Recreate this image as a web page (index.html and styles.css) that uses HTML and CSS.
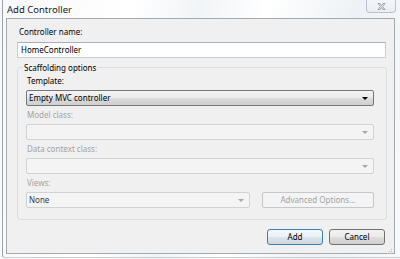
FILE: index.html
```html
<!DOCTYPE html>
<html>
<head>
  <link rel="stylesheet" href="styles.css">
</head>
<body>
  <div class="frame">
    <div class="titlebar">
      <span class="title">Add Controller</span>
      <span class="close">
        <svg width="9" height="7" viewBox="0 0 9 7"><path d="M1 0.5h2l1.5 2l1.5-2h2l-2.5 3l2.5 3h-2l-1.5-2l-1.5 2h-2l2.5-3z" fill="none" stroke="#8a9098" stroke-width="0.8"/></svg>
      </span>
    </div>
    <div class="client">
      <div class="field_label">Controller name:</div>
      <div class="textbox">HomeController</div>

      <fieldset class="group">
        <legend>Scaffolding options</legend>
        <div class="row_label">Template:</div>
        <div class="combo active">
          <span>Empty MVC controller</span>
          <span class="arrow dark"></span>
        </div>

        <div class="row_label disabled">Model class:</div>
        <div class="combo off">
          <span></span>
          <span class="arrow"></span>
        </div>

        <div class="row_label disabled">Data context class:</div>
        <div class="combo off">
          <span></span>
          <span class="arrow"></span>
        </div>

        <div class="row_label disabled">Views:</div>
        <div class="views_row">
          <div class="combo off views">
            <span class="none_text">None</span>
            <span class="arrow"></span>
          </div>
          <div class="btn_off">Advanced Options...</div>
        </div>
      </fieldset>

      <div class="buttons">
        <div class="btn default">Add</div>
        <div class="btn">Cancel</div>
      </div>
      <div class="grip">
        <svg width="6" height="6" viewBox="0 0 6 6"><rect x="4" y="0" width="1" height="1" fill="#b8bcc0"/><rect x="2" y="2" width="1" height="1" fill="#b8bcc0"/><rect x="4" y="2" width="1" height="1" fill="#b8bcc0"/><rect x="0" y="4" width="1" height="1" fill="#b8bcc0"/><rect x="2" y="4" width="1" height="1" fill="#b8bcc0"/><rect x="4" y="4" width="1" height="1" fill="#b8bcc0"/></svg>
      </div>
    </div>
  </div>
</body>
</html>
```

FILE: styles.css
```css
body {
  margin: 0;
  width: 400px;
  height: 259px;
  overflow: hidden;
  background: linear-gradient(100deg, #f7f8fa 0%, #ffffff 30%, #f1f4f7 45%, #ffffff 60%, #eef2f6 80%, #f8f9fb 100%);
  font-family: "Noto Sans", sans-serif;
  font-size: 8px;
  color: #000;
}

.frame {
  margin-left: 2px;
  height: 257px;
  border-left: 1px solid #9aa1a8;
  border-bottom: 1px solid #c8cdd2;
  border-bottom-left-radius: 3px;
  padding-left: 3px;
}

.titlebar {
  height: 18px;
  display: flex;
  justify-content: space-between;
  align-items: flex-start;
}

.title {
  font-size: 9.5px;
  margin-top: 3px;
  margin-left: 1px;
  color: #1a1a1a;
}

.close {
  width: 28px;
  height: 12px;
  margin-right: 4px;
  border: 1px solid #b9c2cb;
  border-top: none;
  border-radius: 0 0 4px 4px;
  background: linear-gradient(#f4f7fa, #e9eef3);
  display: flex;
  justify-content: center;
  align-items: center;
}

.client {
  width: 387px;
  height: 234px;
  border: 1px solid #a5aab0;
  background: #f0f0f0;
  position: relative;
}

.field_label {
  margin: 7px 0 0 12px;
  height: 11px;
  line-height: 11px;
}

.textbox {
  margin: 5px 0 0 10px;
  width: 364px;
  height: 14px;
  line-height: 14px;
  padding-left: 3px;
  background: #fff;
  border: 1px solid #c5cdd6;
  border-top-color: #a9b1ba;
}

.group {
  margin: 4px 0 0 10px;
  width: 370px;
  height: 158px;
  box-sizing: border-box;
  border: 1px solid #d8dde2;
  border-radius: 3px;
  padding: 0 0 0 8px;
}

.group legend {
  padding: 0 1px;
  margin-left: -3px;
  line-height: 11px;
}

.row_label {
  margin: 3px 0 0 1px;
  height: 10px;
  line-height: 10px;
}

.row_label.disabled {
  color: #a3a3a3;
  margin-top: 4px;
}

.combo {
  margin-top: 4px;
  width: 344px;
  height: 14px;
  display: flex;
  justify-content: space-between;
  align-items: center;
  padding-left: 2px;
  line-height: 14px;
}

.combo.active {
  border: 1px solid #767676;
  border-radius: 2px;
  background: linear-gradient(#f3f3f3 0%, #ebebeb 48%, #dcdcdc 52%, #cfcfcf 100%);
}

.combo.off {
  border: 1px solid #cfd3d6;
  border-radius: 2px;
  background: #f4f4f4;
}

.arrow {
  width: 0;
  height: 0;
  margin-right: 5px;
  border-left: 3px solid transparent;
  border-right: 3px solid transparent;
  border-top: 3px solid #a8a8a8;
}

.arrow.dark {
  border-top-color: #000;
}

.views_row {
  display: flex;
  gap: 12px;
}

.combo.views {
  width: 220px;
}

.none_text {
  color: #3a3a3a;
}

.btn_off {
  margin-top: 4px;
  width: 110px;
  height: 14px;
  line-height: 14px;
  text-align: center;
  border: 1px solid #c5c8cb;
  border-radius: 2px;
  background: #f4f4f4;
  color: #a3a3a3;
}

.buttons {
  display: flex;
  justify-content: flex-end;
  gap: 6px;
  margin: 9px 9px 0 0;
}

.btn {
  width: 54px;
  height: 14px;
  line-height: 14px;
  text-align: center;
  border: 1px solid #707070;
  border-radius: 3px;
  background: linear-gradient(#f2f2f2 0%, #ebebeb 48%, #dddddd 52%, #cfcfcf 100%);
}

.btn.default {
  border-color: #3c7fb1;
  background: linear-gradient(#f4f9fc 0%, #e9f2f8 48%, #dbe4ea 52%, #cfd8de 100%);
}

.grip {
  position: absolute;
  right: 1px;
  bottom: 1px;
  width: 6px;
  height: 6px;
}
```
